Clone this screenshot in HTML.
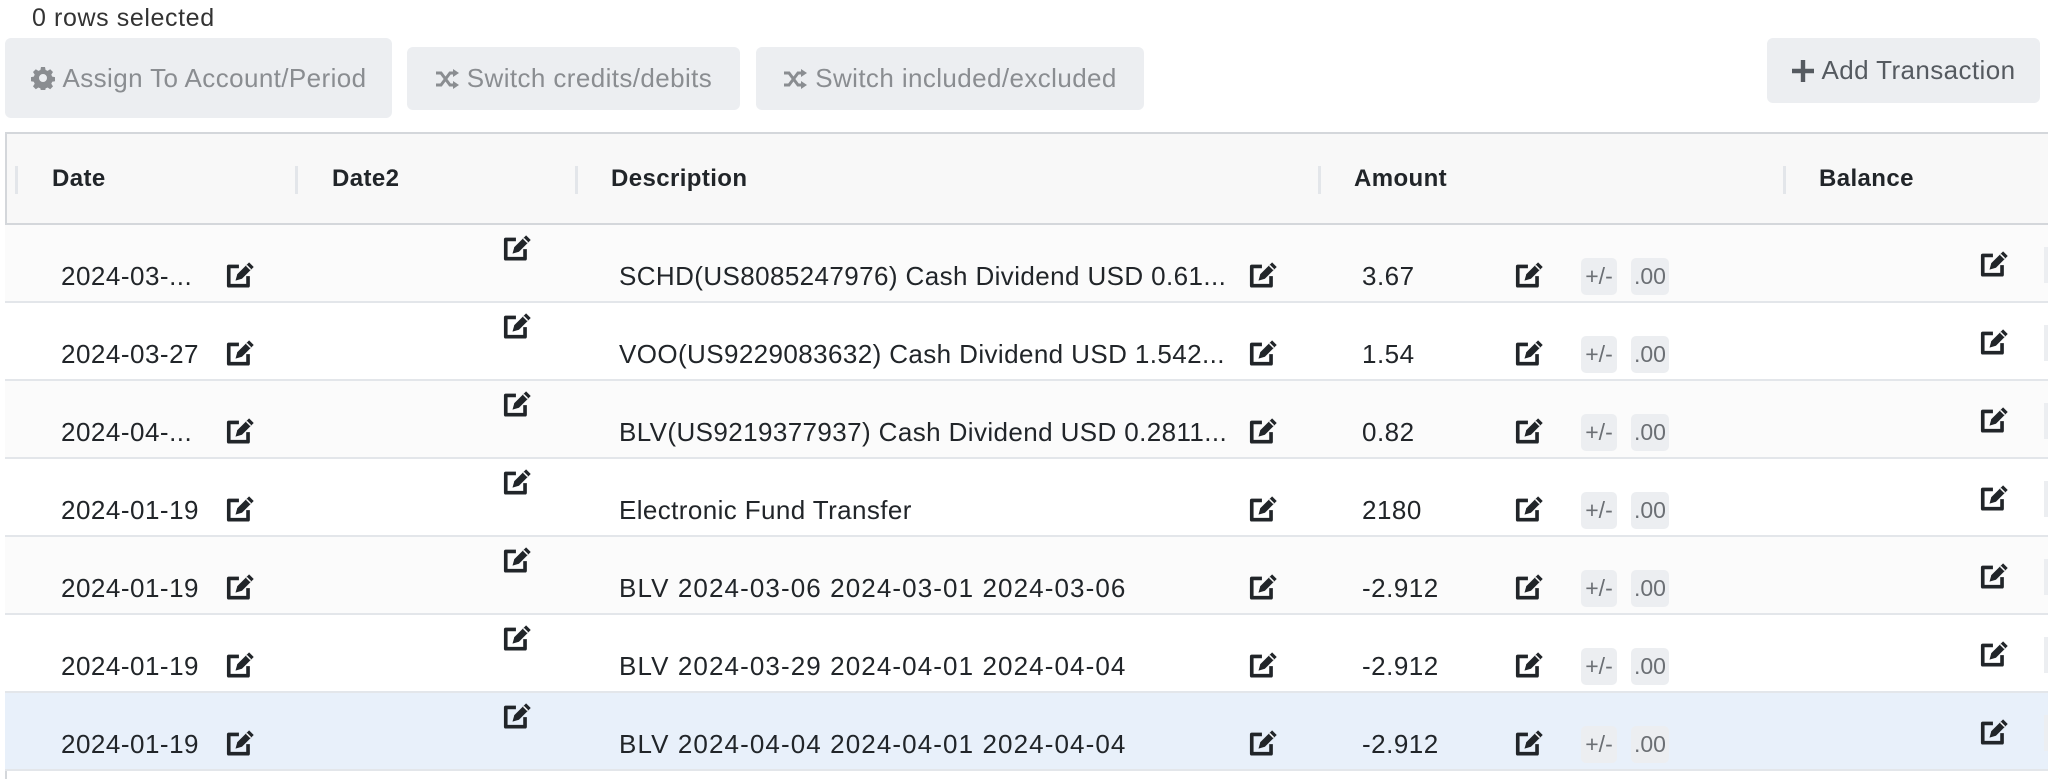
<!DOCTYPE html>
<html><head><meta charset="utf-8"><style>
*{margin:0;padding:0;box-sizing:border-box}
body{width:2048px;height:779px;overflow:hidden;background:#fff;font-family:"Liberation Sans",sans-serif;color:#212529;position:relative}
.a{position:absolute;white-space:nowrap}
.btn{position:absolute;background:#eceef1;border-radius:6px;color:#8a8d91;font-size:26px;letter-spacing:0.4px;display:flex;align-items:center;justify-content:center;gap:8px}
.th{position:absolute;top:165px;font-weight:bold;font-size:24px;letter-spacing:0.4px;color:#212529}
.sep{position:absolute;top:166px;width:3px;height:28px;background:#e3e6ea}
.row{position:absolute;left:5px;width:2043px;height:78px;border-bottom:2px solid #e3e6ea}
.t{position:absolute;font-size:26px;letter-spacing:0.5px;line-height:30px;white-space:nowrap}
.ic{position:absolute;width:30px;height:28px}
.bd{position:absolute;height:37px;background:#eceef1;border-radius:5px;color:#6b6f74;font-size:23px;line-height:37px;text-align:center}
</style></head><body>
<div class="a" style="left:32px;top:4px;font-size:25px;letter-spacing:0.6px;color:#333">0 rows selected</div>
<div class="btn" style="left:5px;top:38px;width:387px;height:80px"><svg width="24" height="24" viewBox="0 0 24 24"><path fill="#8a8d91" d="M10 1h4l.6 3 2 .9 2.6-1.7 2.8 2.8-1.7 2.6.9 2 3 .6v4l-3 .6-.9 2 1.7 2.6-2.8 2.8-2.6-1.7-2 .9-.6 3h-4l-.6-3-2-.9-2.6 1.7-2.8-2.8 1.7-2.6-.9-2-3-.6v-4l3-.6.9-2-1.7-2.6 2.8-2.8 2.6 1.7 2-.9zM12 8a4 4 0 1 0 0 8 4 4 0 0 0 0-8z"/></svg>Assign To Account/Period</div>
<div class="btn" style="left:407px;top:47px;width:333px;height:63px"><svg width="24" height="20" viewBox="0 0 24 20"><path fill="none" stroke="#8a8d91" stroke-width="3" d="M1 4h5l9 12h5M1 16h5l9-12h5"/><path fill="#8a8d91" d="M18 0l6 4-6 4zM18 12l6 4-6 4z"/></svg>Switch credits/debits</div>
<div class="btn" style="left:756px;top:47px;width:388px;height:63px"><svg width="24" height="20" viewBox="0 0 24 20"><path fill="none" stroke="#8a8d91" stroke-width="3" d="M1 4h5l9 12h5M1 16h5l9-12h5"/><path fill="#8a8d91" d="M18 0l6 4-6 4zM18 12l6 4-6 4z"/></svg>Switch included/excluded</div>
<div class="btn" style="left:1767px;top:38px;width:273px;height:65px;color:#555a60"><svg width="22" height="22" viewBox="0 0 20 20"><path fill="#555a60" d="M8 0h4v8h8v4h-8v8H8v-8H0V8h8z"/></svg>Add Transaction</div>

<div class="a" style="left:5px;top:132px;width:2043px;height:93px;background:#f8f8f8;border-top:2px solid #d4d7db;border-bottom:2px solid #d4d7db;border-left:2px solid #d4d7db"></div>
<div class="sep" style="left:15px"></div><div class="sep" style="left:295px"></div><div class="sep" style="left:575px"></div><div class="sep" style="left:1318px"></div><div class="sep" style="left:1783px"></div>
<div class="th" style="left:52px">Date</div>
<div class="th" style="left:332px">Date2</div>
<div class="th" style="left:611px">Description</div>
<div class="th" style="left:1354px">Amount</div>
<div class="th" style="left:1819px">Balance</div>
<div class="a" style="left:5px;top:225px;width:2px;height:554px;background:#d4d7db"></div>

<svg width="0" height="0" style="position:absolute"><defs><symbol id="e" viewBox="0 0 28 26"><path fill="none" stroke="#212529" stroke-width="3.4" stroke-linejoin="round" d="M13 5H3.5v18h18v-9"/><path fill="#212529" d="M22.5 1.2l4.3 4.3-11 11-6 1.7 1.7-6z"/><path stroke="#fff" stroke-width="1.4" d="M20 4l4 4"/></symbol></defs></svg>

<div id="rows"></div>
<script>
var d=[["2024-03-...","SCHD(US8085247976) Cash Dividend USD 0.61...","3.67"],["2024-03-27","VOO(US9229083632) Cash Dividend USD 1.542...","1.54"],["2024-04-...","BLV(US9219377937) Cash Dividend USD 0.2811...","0.82"],["2024-01-19","Electronic Fund Transfer","2180"],["2024-01-19","BLV 2024-03-06 2024-03-01 2024-03-06","-2.912"],["2024-01-19","BLV 2024-03-29 2024-04-01 2024-04-04","-2.912"],["2024-01-19","BLV 2024-04-04 2024-04-01 2024-04-04","-2.912"]];
var tops=[225,303,381,459,537,615,693],h="";
function ic(x,y){return '<svg class="ic" style="left:'+x+'px;top:'+y+'px"><use href="#e"/></svg>';}
d.forEach(function(r,i){var t=tops[i];var bg=i==6?"#e8f0fa":(i%2==0?"#fbfbfb":"#fff");
var ls=(r[1].indexOf("BLV 2024")==0)?"1.1px":"0.4px";
h+='<div class="row" style="top:'+t+'px;background:'+bg+'"></div>';
h+='<div class="t" style="left:61px;top:'+(t+36)+'px">'+r[0]+'</div>'+ic(225,t+36);
h+=ic(502,t+9);
h+='<div class="t" style="left:619px;top:'+(t+36)+'px;letter-spacing:'+ls+'">'+r[1]+'</div>'+ic(1248,t+36);
h+='<div class="t" style="left:1362px;top:'+(t+36)+'px">'+r[2]+'</div>'+ic(1514,t+36);
h+='<div class="bd" style="left:1581px;top:'+(t+33)+'px;width:36px">+/-</div><div class="bd" style="left:1631px;top:'+(t+33)+'px;width:38px">.00</div>';
h+=ic(1979,t+25);
h+='<div class="a" style="left:2044px;top:'+(t+22)+'px;width:4px;height:36px;background:#eceef1"></div>';
});
document.getElementById("rows").innerHTML=h;
</script>
</body></html>
